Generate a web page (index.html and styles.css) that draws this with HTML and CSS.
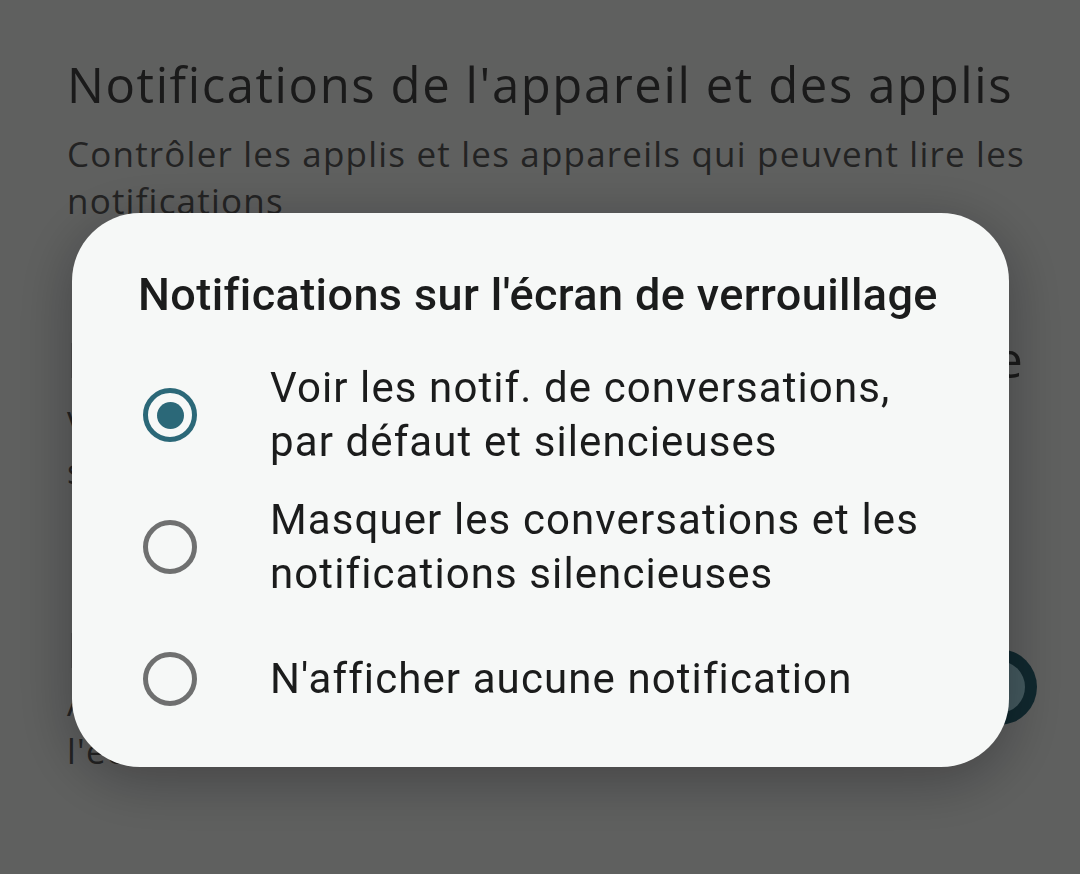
FILE: index.html
```html
<!DOCTYPE html>
<html lang="fr">
<head>
  <meta charset="UTF-8" />
  <meta name="viewport" content="width=device-width, initial-scale=1.0"/>
  <title>Notifications sur l'écran de verrouillage</title>
  <link rel="stylesheet" href="styles.css">
</head>
<body>
  <!-- Settings page under the dialog -->
  <div class="page">
    <div class="pref">
      <div class="pref-title">Notifications de l'appareil et des applis</div>
      <div class="pref-summary">Contrôler les applis et les appareils qui peuvent lire les notifications</div>
    </div>
    <div class="pref pref-lock">
      <div class="pref-title">Notifications sur l'écran de verrouillage</div>
      <div class="pref-summary">Voir les notif. de conversations, par défaut et silencieuses</div>
    </div>
    <div class="pref pref-row">
      <div class="pref-text">
        <div class="pref-title">Notifications sensibles</div>
        <div class="pref-summary">Afficher le contenu sensible lorsque l'écran est verrouillé</div>
      </div>
      <div class="switch on"><span class="thumb"></span></div>
    </div>
  </div>

  <!-- Scrim + dialog -->
  <div class="scrim"></div>
  <div class="dialog">
    <div class="dialog-title">Notifications sur l'écran de verrouillage</div>
    <div class="options">
      <label class="option">
        <span class="radio checked"></span>
        <span class="option-label">Voir les notif. de conversations, par défaut et silencieuses</span>
      </label>
      <label class="option">
        <span class="radio"></span>
        <span class="option-label">Masquer les conversations et les notifications silencieuses</span>
      </label>
      <label class="option">
        <span class="radio"></span>
        <span class="option-label">N'afficher aucune notification</span>
      </label>
    </div>
  </div>
</body>
</html>
```

FILE: styles.css
```css
/* Reset */
* { margin: 0; padding: 0; box-sizing: border-box; }
html, body { height: 100%; }
body {
  font-family: Roboto, "Open Sans", sans-serif;
  background: #f4f6f5;
  overflow: hidden;
}

/* Settings page */
.page {
  padding: 54px 43px 0 67px;
  font-family: "Open Sans", Roboto, sans-serif;
}
.pref-title {
  font-size: 49px;
  line-height: 60px;
  letter-spacing: 1.6px;
  color: #454545;
}
.pref-summary {
  font-size: 35px;
  line-height: 47px;
  letter-spacing: 1.2px;
  color: #5c5c5c;
  margin-top: 16px;
}
.pref-lock { margin-top: 105px; }
.pref-lock .pref-summary { margin-top: 11px; }
.pref-row {
  display: flex;
  align-items: center;
  gap: 30px;
  margin-top: 125px;
}
.pref-row .pref-summary { margin-top: 0; line-height: 48px; }
.pref-text { flex: 1; max-width: 680px; margin-right: auto; }

/* Switch */
.switch {
  width: 135px;
  height: 76px;
  border-radius: 38px;
  background: #2b6878;
  display: flex;
  align-items: center;
  justify-content: flex-end;
  padding: 0 12px;
  flex-shrink: 0;
  margin-bottom: 20px;
}
.switch .thumb {
  width: 52px;
  height: 52px;
  border-radius: 50%;
  background: #aee5f3;
}

/* Scrim */
.scrim {
  position: fixed;
  inset: 0;
  background: rgba(0,0,0,0.61);
}

/* Dialog */
.dialog {
  position: fixed;
  top: 213px;
  left: 72px;
  width: 937px;
  height: 554px;
  background: #f6f8f7;
  border-radius: 68px;
  box-shadow: 0 12px 60px rgba(0,0,0,0.3);
  padding: 52px 0 0 66px;
}
.dialog-title {
  font-size: 45px;
  font-weight: 500;
  line-height: 60px;
  letter-spacing: 0.4px;
  color: #1b1c1c;
}
.options {
  margin-top: 24px;
}
.option {
  display: flex;
  align-items: center;
  height: 132px;
  gap: 73px;
  padding-left: 5px;
}
.option-label {
  font-size: 42px;
  line-height: 54px;
  letter-spacing: 1.1px;
  color: #1b1c1c;
  width: 670px;
}

/* Radio buttons */
.radio {
  width: 54px;
  height: 54px;
  border-radius: 50%;
  border: 5px solid #6f7070;
  display: flex;
  align-items: center;
  justify-content: center;
  flex-shrink: 0;
}
.radio.checked { border-color: #2b6878; }
.radio.checked::after {
  content: "";
  width: 27px;
  height: 27px;
  border-radius: 50%;
  background: #2b6878;
}
```
